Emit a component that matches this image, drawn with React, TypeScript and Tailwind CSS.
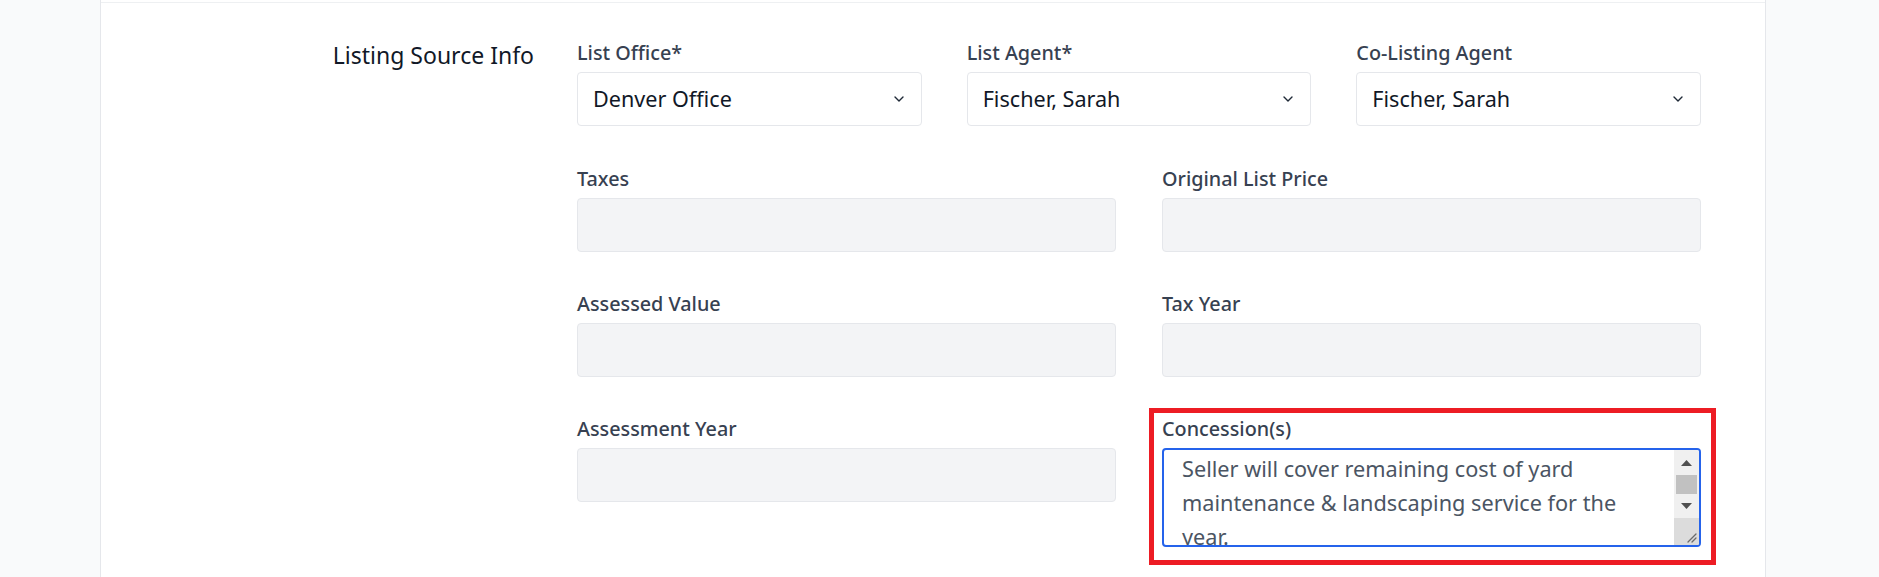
import React from "react";

function Chevron() {
  return (
    <svg width="10" height="6" viewBox="0 0 10 6" fill="none" className="shrink-0">
      <path d="M1 1l4 4 4-4" stroke="#1f2937" strokeWidth="1.4" strokeLinecap="round" strokeLinejoin="round" />
    </svg>
  );
}

function Label({ children }: { children: React.ReactNode }) {
  return (
    <div className="text-[19.8px] leading-[26px] font-medium text-[#374151] mb-[6px] whitespace-nowrap">{children}</div>
  );
}

function SelectField({ label, value }: { label: string; value: string }) {
  return (
    <div>
      <Label>{label}</Label>
      <div className="h-[54px] rounded-[4px] border border-[#e5e7eb] bg-white flex items-center justify-between pl-[15px] pr-[17px]">
        <span className="text-[21.6px] text-[#111827]">{value}</span>
        <Chevron />
      </div>
    </div>
  );
}

function InputField({ label }: { label: string }) {
  return (
    <div>
      <Label>{label}</Label>
      <div className="h-[54px] rounded-[4px] border border-[#e5e7eb] bg-[#f3f4f6]" />
    </div>
  );
}

function Scrollbar() {
  return (
    <div className="w-[25px] shrink-0 flex flex-col bg-[#f0f0f0]">
      <div className="h-[25px] flex items-center justify-center">
        <svg width="11" height="6" viewBox="0 0 11 6"><path d="M5.5 0L11 6H0z" fill="#505050" /></svg>
      </div>
      <div className="h-[19px] mx-[2px] bg-[#c1c1c1]" />
      <div className="h-[24px] flex items-center justify-center">
        <svg width="11" height="6" viewBox="0 0 11 6"><path d="M0 0h11L5.5 6z" fill="#505050" /></svg>
      </div>
      <div className="flex-1 bg-[#dcdcdc] flex items-end justify-end pr-[2px] pb-[2px]">
        <svg width="12" height="12" viewBox="0 0 12 12">
          <path d="M11 3L3 11M11 7L7 11" stroke="#6b6b6b" strokeWidth="1.3" strokeLinecap="round" />
        </svg>
      </div>
    </div>
  );
}

export default function App() {
  return (
    <div className="flex min-h-[577px] bg-[#f9fafb] font-['Noto_Sans',sans-serif]">
      <div className="w-[100px] shrink-0" />
      <div className="w-[1666px] shrink-0 bg-white border-x border-[#e5e7eb]">
        <div className="mt-[2px] border-t border-[#eef0f2] pt-[37px] flex">
          <div className="w-[433px] shrink-0 text-right text-[23px] leading-[30px] text-[#111827] whitespace-nowrap">
            Listing Source Info
          </div>
          <div className="ml-[43px] w-[1124px]">
            <div className="grid grid-cols-3 gap-x-[45px]">
              <SelectField label="List Office*" value="Denver Office" />
              <SelectField label="List Agent*" value="Fischer, Sarah" />
              <SelectField label="Co-Listing Agent" value="Fischer, Sarah" />
            </div>
            <div className="grid grid-cols-2 gap-x-[46px] gap-y-[39px] mt-[40px]">
              <InputField label="Taxes" />
              <InputField label="Original List Price" />
              <InputField label="Assessed Value" />
              <InputField label="Tax Year" />
              <InputField label="Assessment Year" />
              <div className="relative">
                <div className="absolute -left-[13px] -right-[15px] -top-[8px] -bottom-[18px] border-[5px] border-[#ed1c24] pointer-events-none" />
                <Label>Concession(s)</Label>
                <div className="h-[99px] rounded-[4px] border-2 border-[#2563eb] bg-white flex overflow-hidden">
                  <div className="flex-1 pl-[18px] pt-[2px] text-[21.7px] leading-[34px] text-[#4b5563] overflow-hidden whitespace-nowrap">
                    <div>Seller will cover remaining cost of yard</div>
                    <div>maintenance &amp; landscaping service for the</div>
                    <div>year.</div>
                  </div>
                  <Scrollbar />
                </div>
              </div>
            </div>
          </div>
        </div>
      </div>
    </div>
  );
}
